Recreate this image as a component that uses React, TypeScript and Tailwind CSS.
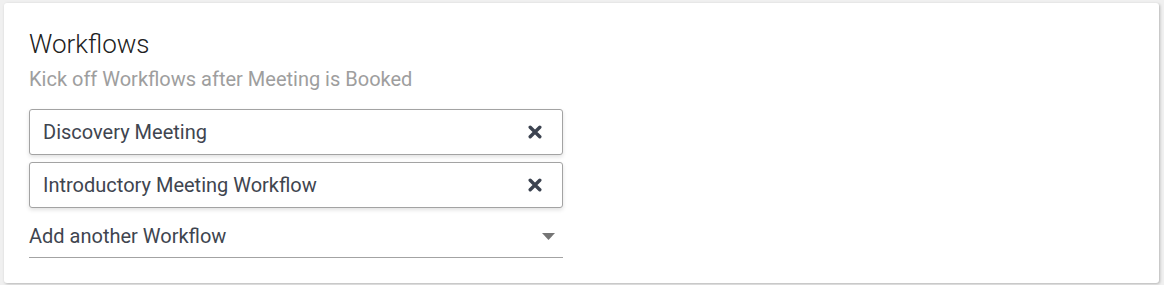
import React from "react";

function TimesIcon() {
  return (
    <svg width="14" height="14" viewBox="0 0 14 14" aria-hidden="true">
      <path d="M2.2 2.2 L11.8 11.8 M11.8 2.2 L2.2 11.8" stroke="#3c4350" strokeWidth="3.4" strokeLinecap="round" />
    </svg>
  );
}

function Chip({ label }: { label: string }) {
  return (
    <div className="flex h-[46px] w-[534px] items-center justify-between rounded-[3px] border border-[#a3a3a3] bg-white pl-[13px] pr-[20px] shadow-[0_2px_4px_rgba(0,0,0,0.12)]">
      <span className="text-[20px] leading-[24px] text-[#40454f]">{label}</span>
      <TimesIcon />
    </div>
  );
}

export default function App() {
  return (
    <div className="h-[285px] w-[1164px] bg-[#f0f0f0] pl-[4px] pt-[3px]" style={{ fontFamily: "Roboto, 'Noto Sans', sans-serif" }}>
      <div className="h-[280px] w-[1155px] rounded-[3px] bg-white pl-[25px] pt-[26px] shadow-[1px_1px_3px_rgba(0,0,0,0.25)]">
        <div className="text-[26px] font-light leading-[30px] text-[#212121]">Workflows</div>
        <div className="mt-[8px] text-[20px] leading-[24px] text-[#9e9e9e]">Kick off Workflows after Meeting is Booked</div>
        <div className="mt-[18px] flex flex-col gap-[7px]">
          <Chip label="Discovery Meeting" />
          <Chip label="Introductory Meeting Workflow" />
        </div>
        <div className="flex w-[534px] items-center justify-between border-b border-[#a3a3a3] pb-[9px] pr-[8px] pt-[16px]">
          <span className="text-[20px] leading-[24px] text-[#40454f]">Add another Workflow</span>
          <svg width="13" height="7" viewBox="0 0 13 7" aria-hidden="true">
            <path d="M0 0 L13 0 L6.5 7 Z" fill="#757575" />
          </svg>
        </div>
      </div>
    </div>
  );
}
